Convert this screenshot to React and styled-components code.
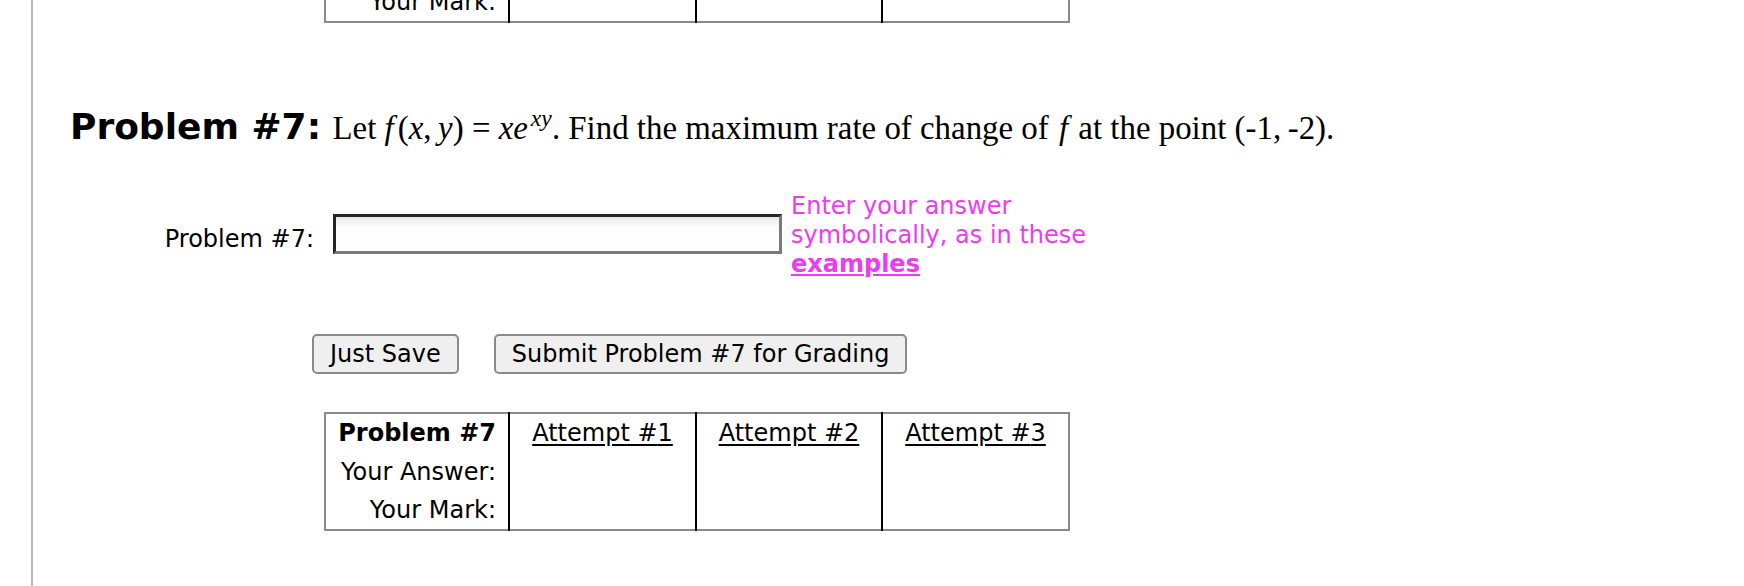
import React from 'react'
import styled, { createGlobalStyle } from 'styled-components'

const GlobalStyle = createGlobalStyle`
  html, body {
    margin: 0;
    padding: 0;
    background: #fff;
    overflow: hidden;
  }
  body {
    font-family: "DejaVu Sans", Verdana, sans-serif;
    font-size: 24px;
    color: #000;
  }
`

const Page = styled.div`
  display: flow-root;
  min-height: 100vh;
  margin-left: 31px;
  border-left: 2px solid #b8b8b8;
  padding-left: 37px;
`

const PrevBlock = styled.div`
  margin-top: -96px;
`

const Heading = styled.div`
  margin-top: 82px;
  font-size: 36px;
  line-height: 44px;
  white-space: nowrap;
`

const HeadLabel = styled.span`
  font-weight: bold;
`

const MathText = styled.span`
  font-family: "Liberation Serif", "Times New Roman", serif;
  font-size: 32.9px;
  line-height: 1;
`

const Var = styled.i`
  font-style: italic;
  padding: ${(p) => p.$pad || '0'};
`

const Sup = styled.sup`
  font-size: 0.72em;
  font-style: italic;
  line-height: 0;
  vertical-align: 0.55em;
  margin-left: 3px;
`

const AnswerRow = styled.div`
  display: flex;
  align-items: flex-start;
  margin-top: 43px;
`

const AnswerLabel = styled.label`
  width: 244px;
  margin-top: 33px;
  text-align: right;
  line-height: 28px;
`

const AnswerInput = styled.input`
  box-sizing: border-box;
  width: 449px;
  height: 40px;
  margin-top: 22px;
  margin-left: 19px;
  border-style: solid;
  border-width: 3px;
  border-color: #262626 #7a7a7a #7a7a7a #262626;
  background: linear-gradient(#e9e9e9, #fdfdfd 30%, #fdfdfd);
  font: inherit;
  padding: 0 6px;
  outline: none;
`

const Hint = styled.div`
  width: 300px;
  margin-left: 9px;
  color: #ef3bef;
  line-height: 29px;
`

const HintLink = styled.a`
  color: #ef3bef;
  font-weight: bold;
  text-decoration: underline;
`

const ButtonRow = styled.div`
  display: flex;
  gap: 35px;
  margin-top: 55px;
  margin-left: 242px;
`

const Button = styled.button`
  box-sizing: border-box;
  height: 40px;
  padding: 0 16px;
  border: 2px solid #8a8a8a;
  border-radius: 5px;
  background: #efefef;
  font: inherit;
  color: #000;
`

const Table = styled.table`
  margin-left: 254px;
  margin-top: ${(p) => p.$top || 0}px;
  border-collapse: collapse;
  table-layout: fixed;
  border: 2px solid #8a8a8a;
`

const Cell = styled.td`
  width: ${(p) => p.$w}px;
  height: 39px;
  padding: 0;
  padding-right: ${(p) => (p.$head ? '12px' : '0')};
  line-height: 28px;
  text-align: ${(p) => (p.$head ? 'right' : 'center')};
  font-weight: ${(p) => (p.$bold ? 'bold' : 'normal')};
  border-left: ${(p) => (p.$head ? 'none' : '2px solid #000')};
  box-sizing: border-box;
`

const AttemptLink = styled.span`
  text-decoration: underline;
  text-underline-offset: 3px;
`

const widths = [184, 187, 186, 187]

const AttemptsTable = ({ problem, top }) => (
  <Table $top={top}>
    <tbody>
      <tr>
        <Cell $head $bold $w={widths[0]}>Problem #{problem}</Cell>
        {[1, 2, 3].map((n) => (
          <Cell key={n} $w={widths[n]}>
            <AttemptLink>Attempt #{n}</AttemptLink>
          </Cell>
        ))}
      </tr>
      {['Your Answer:', 'Your Mark:'].map((label) => (
        <tr key={label}>
          <Cell $head $w={widths[0]}>{label}</Cell>
          <Cell $w={widths[1]} />
          <Cell $w={widths[2]} />
          <Cell $w={widths[3]} />
        </tr>
      ))}
    </tbody>
  </Table>
)

export default function App() {
  return (
    <>
      <GlobalStyle />
      <Page>
        <PrevBlock>
          <AttemptsTable problem={6} />
        </PrevBlock>

        <Heading>
          <HeadLabel>Problem #7:</HeadLabel>{' '}
          <MathText>
            Let <Var $pad="0 4px 0 0">f</Var>(<Var>x</Var>,&thinsp;<Var>y</Var>) = <Var>xe</Var>
            <Sup>xy</Sup>. Find the maximum rate of change of <Var $pad="0 2px">f</Var> at the point (-1,&thinsp;-2).
          </MathText>
        </Heading>

        <AnswerRow>
          <AnswerLabel htmlFor="answer7">Problem #7:</AnswerLabel>
          <AnswerInput id="answer7" type="text" />
          <Hint>
            Enter your answer symbolically, as in these <HintLink href="#">examples</HintLink>
          </Hint>
        </AnswerRow>

        <ButtonRow>
          <Button>Just Save</Button>
          <Button>Submit Problem #7 for Grading</Button>
        </ButtonRow>

        <AttemptsTable problem={7} top={38} />
      </Page>
    </>
  )
}
